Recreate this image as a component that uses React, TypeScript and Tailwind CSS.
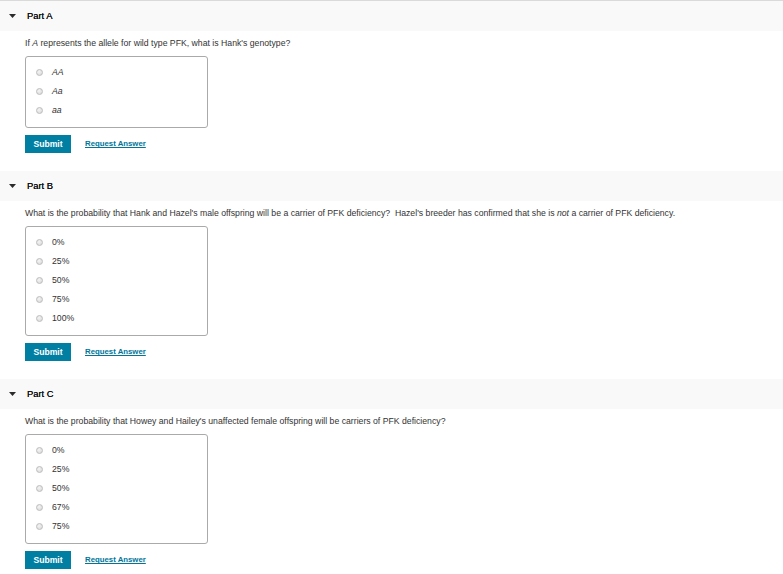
const FONT = "font-['Liberation_Sans',Arial,sans-serif]";

type Part = {
  title: string;
  question: React.ReactNode;
  options: React.ReactNode[];
};

const PARTS: Part[] = [
  {
    title: "Part A",
    question: (
      <>
        If <i>A</i> represents the allele for wild type PFK, what is Hank's genotype?
      </>
    ),
    options: [<i>AA</i>, <i>Aa</i>, <i>aa</i>],
  },
  {
    title: "Part B",
    question: (
      <>
        What is the probability that Hank and Hazel's male offspring will be a carrier of PFK
        deficiency?&nbsp; Hazel's breeder has confirmed that she is <i>not</i> a carrier of PFK
        deficiency.
      </>
    ),
    options: ["0%", "25%", "50%", "75%", "100%"],
  },
  {
    title: "Part C",
    question: (
      <>
        What is the probability that Howey and Hailey's unaffected female offspring will be
        carriers of PFK deficiency?
      </>
    ),
    options: ["0%", "25%", "50%", "67%", "75%"],
  },
];

function Radio() {
  return (
    <span className="h-[7px] w-[7px] shrink-0 rounded-full border border-[#bdbdbd] bg-[radial-gradient(circle_at_40%_35%,#f4f4f4,#d6d6d6)]" />
  );
}

function Section({ part }: { part: Part }) {
  return (
    <section className="pb-[18px]">
      <div className="flex h-[30px] items-center bg-[#f9f9f9]">
        <svg width="7" height="4" viewBox="0 0 7 4" className="ml-[9px] mr-[11px]">
          <path d="M0 0 L7 0 L3.5 4 Z" fill="#2b2b2b" />
        </svg>
        <span className="text-[9.4px] text-[#111] [text-shadow:0_0_0.4px_#111]">{part.title}</span>
      </div>

      <div className="pl-[25px]">
        <p className="mt-[6px] h-[12px] text-[8.7px] leading-[12px] text-[#333]">
          {part.question}
        </p>

        <div className="mt-[7px] w-[183px] rounded-[3px] border border-[#aaaaaa] pt-[6px] pb-[7px] pl-[10px]">
          {part.options.map((o, i) => (
            <label key={i} className="flex h-[19px] items-center gap-[9px]">
              <Radio />
              <span className="text-[8.7px] text-[#333]">{o}</span>
            </label>
          ))}
        </div>

        <div className="mt-[7px] flex items-center gap-[14px]">
          <button className="h-[18px] w-[46px] bg-[#007fa3] text-[8.6px] font-bold text-white">
            Submit
          </button>
          <a className="text-[7.8px] font-bold text-[#00759a] underline">Request Answer</a>
        </div>
      </div>
    </section>
  );
}

export default function App() {
  return (
    <div className={`${FONT} min-h-screen w-[783px] border-t border-[#dadada] bg-white`}>
      {PARTS.map((p) => (
        <Section key={p.title} part={p} />
      ))}
    </div>
  );
}
